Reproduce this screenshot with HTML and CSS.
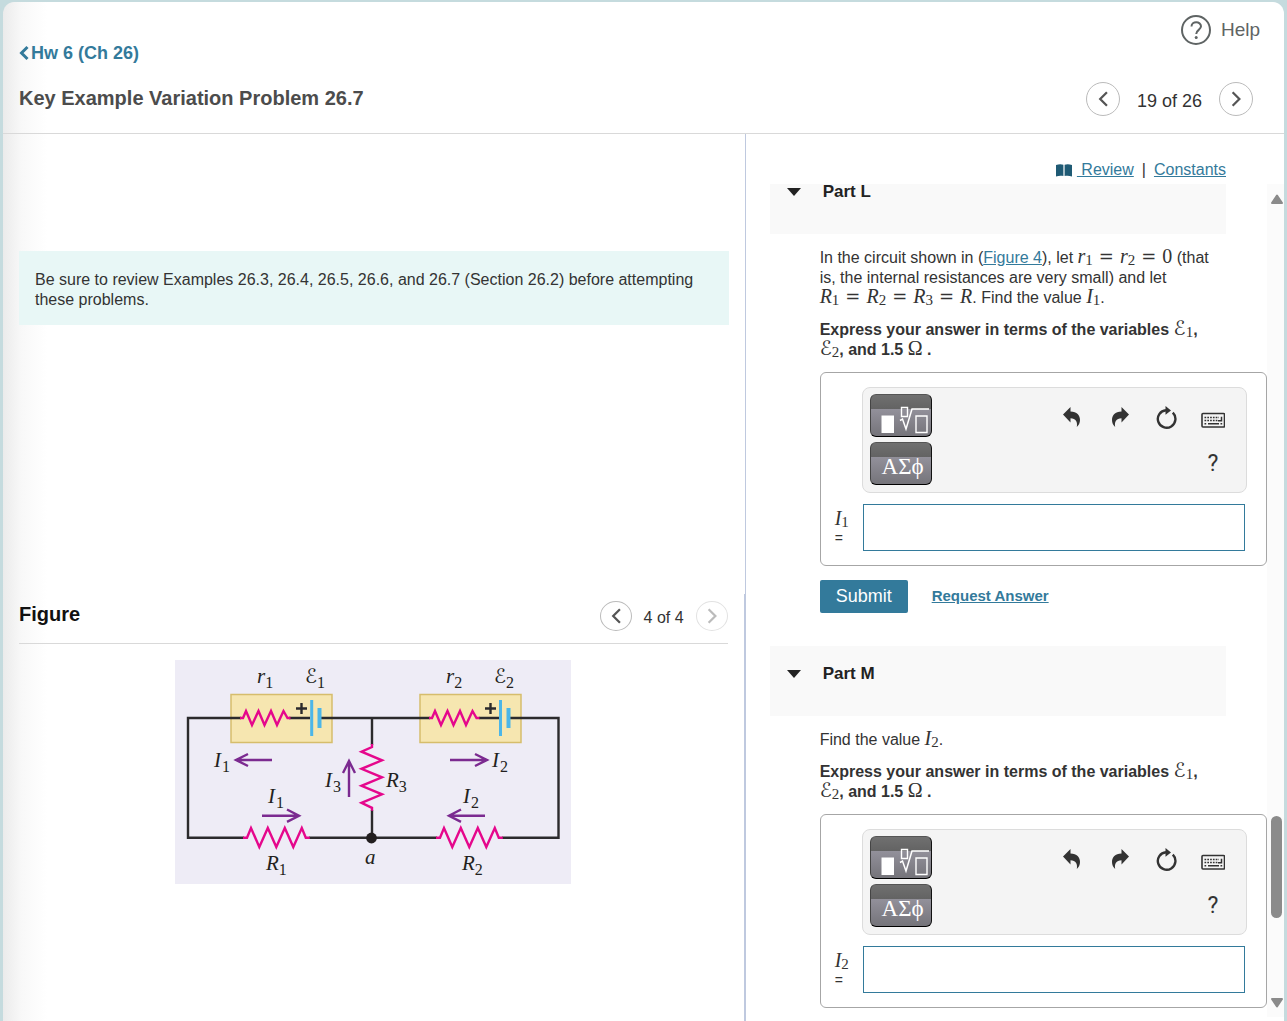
FILE: index.html
```html
<!DOCTYPE html>
<html lang="en">
<head>
  <meta charset="UTF-8">
  <meta name="viewport" content="width=device-width, initial-scale=1">
  <title>Key Example Variation Problem 26.7</title>
  <link rel="stylesheet" href="styles.css">
</head>
<body>
  <!-- Shared icons -->
  <svg class="sprite" aria-hidden="true">
    <symbol id="icon-left" viewBox="0 0 14 16"><path d="M10.500 2L4.500 8l6 6" fill="none" stroke="currentColor" stroke-width="2"/></symbol>
    <symbol id="icon-right" viewBox="0 0 14 16"><path d="M4 2l6 6-6 6" fill="none" stroke="currentColor" stroke-width="2"/></symbol>
    <symbol id="icon-undo" viewBox="0 0 24 24"><path d="M3 8.500L10.500 1v4.500c6.500.2 9.500 3.700 9.500 8.500 0 3-1.200 5-3.200 7 1-5-1-8.500-6.300-8.700v4.200z" fill="currentColor"/></symbol>
    <symbol id="icon-redo" viewBox="0 0 24 24"><path d="M22 8.500L14.500 1v4.500C8 5.700 5 9.200 5 14c0 3 1.200 5 3.200 7-1-5 1-8.500 6.300-8.700v4.200z" fill="currentColor"/></symbol>
    <symbol id="icon-reset" viewBox="0 0 24 24"><path d="M18.800 6.700A8.800 8.800 0 1 1 12 4.200" fill="none" stroke="currentColor" stroke-width="2.400"/><path d="M11.500 0l5.500 4.600-5.500 4.200z" fill="currentColor"/></symbol>
    <symbol id="icon-keyboard" viewBox="0 0 24 24"><rect x="1" y="7.500" width="22.500" height="13.500" rx="1" fill="none" stroke="currentColor" stroke-width="1.600"/><path d="M3.500 11.500H18M3.500 14.500H17M3.500 17.700H6M19.500 17.700H21.500" fill="none" stroke="currentColor" stroke-width="1.500" stroke-dasharray="1.700 1.100"/><path d="M20.500 10.700v4H17M7 17.700h11" fill="none" stroke="currentColor" stroke-width="1.500"/></symbol>
    <symbol id="icon-template" viewBox="0 0 62 43">
      <path d="M11.500 21.500h12.500v17.500h-12.500z" fill="#fff"/>
      <path d="M31.500 13.500h6v9h-6zM46 22h11v16.500h-11z" fill="none" stroke="#fff" stroke-width="1.400"/>
      <path d="M30 26.500l2.500-1.500 3.500 10 6-20h17" fill="none" stroke="#fff" stroke-width="1.500"/>
    </symbol>
  </svg>

  <div class="page">
    <header class="header">
      <div class="header-titles">
        <a class="back-link" href="#"><svg class="back-icon" viewBox="0 0 10 16" aria-hidden="true"><path d="M8.500 2L2.500 8l6 6" fill="none" stroke="currentColor" stroke-width="3"/></svg>Hw 6 (Ch 26)</a>
        <h1>Key Example Variation Problem 26.7</h1>
      </div>
      <div class="header-tools">
        <a class="help-link" href="#">
          <svg class="help-icon" viewBox="0 0 30 30" aria-hidden="true"><circle cx="15" cy="15" r="14" fill="none" stroke="currentColor" stroke-width="2"/><path d="M10.500 11.500c0-5.500 9.500-5.500 9.500-.2 0 3.500-4.800 3.700-4.800 7.700" fill="none" stroke="currentColor" stroke-width="2"/><circle cx="15.200" cy="22.500" r="1.500" fill="currentColor"/></svg>
          Help
        </a>
        <nav class="pager" aria-label="Items">
          <button class="round-btn" aria-label="Previous item"><svg aria-hidden="true"><use href="#icon-left"/></svg></button>
          <span>19 of 26</span>
          <button class="round-btn" aria-label="Next item"><svg aria-hidden="true"><use href="#icon-right"/></svg></button>
        </nav>
      </div>
    </header>

    <main class="columns">
      <div class="left">
        <section class="intro">
          <p class="notice">Be sure to review Examples 26.3, 26.4, 26.5, 26.6, and 26.7 (Section 26.2) before attempting these problems.</p>
        </section>

        <section class="figure">
          <div class="figure-head">
            <h2>Figure</h2>
            <nav class="figure-pager" aria-label="Figures">
              <button class="round-btn small" aria-label="Previous figure"><svg aria-hidden="true"><use href="#icon-left"/></svg></button>
              <span>4 of 4</span>
              <button class="round-btn small" aria-label="Next figure" disabled><svg aria-hidden="true"><use href="#icon-right"/></svg></button>
            </nav>
          </div>

          <svg class="circuit" viewBox="0 0 396 224" role="img" aria-label="Two-loop circuit with two batteries and three resistors">
            <rect width="396" height="224" fill="#eeecf6"/>
            <rect x="56" y="34.500" width="101" height="48" fill="#f6e6b0" stroke="#d6bd6c" stroke-width="1.500"/>
            <rect x="245" y="34.500" width="101" height="48" fill="#f6e6b0" stroke="#d6bd6c" stroke-width="1.500"/>
            <!-- wires -->
            <path class="wire" d="M66 58H13v119.700H69M134 177.700H262M327 177.700H383.500V58H334M324 58H304M255 58H145M135 58H114M197 58V85M197 150V178"/>
            <circle cx="196.500" cy="178" r="5.400" fill="#231f20"/>
            <!-- resistors -->
            <path class="resistor" d="M65 58h3l3-7 6 14 6.500-14 6 14 6.500-14 6 14 6.500-14 4 7h3"/>
            <path class="resistor" d="M254 58h3l3-7 6 14 6.500-14 6 14 6.500-14 6 14 6.500-14 4 7h3"/>
            <path class="resistor" d="M68 177.700h4l4-9.700 8.300 19 8.500-19 8.500 19 8.500-19 8.500 19 8.500-19 4 9.700h4"/>
            <path class="resistor" d="M261 177.700h4l4-9.700 8.300 19 8.500-19 8.500 19 8.500-19 8.500 19 8.500-19 4 9.700h4"/>
            <path class="resistor" d="M197 84v3l-10.500 4.700 20.500 8.600-20.500 8.500 20.500 8.500-20.500 8.500 20.500 8.500-20.500 8.500 10.500 5v3"/>
            <!-- batteries -->
            <path class="plate" d="M136.700 40v36M325.500 40v36"/>
            <path class="plate-thick" d="M144.500 48v20M333.500 48v20"/>
            <path class="wire" d="M121 48.500h11M126.500 43v11M310 48.500h11M315.500 43v11"/>
            <!-- current arrows -->
            <path class="arrow" d="M97 100H61M73 94l-12 6 12 6"/>
            <path class="arrow" d="M87 155.700h36M112 149.500l12 6.200-12 6.200"/>
            <path class="arrow" d="M174 137V101M168 113l6-12 6 12"/>
            <path class="arrow" d="M275 100h36M300 94l12 6-12 6"/>
            <path class="arrow" d="M310 155.700H274M286 149.500l-12 6.200 12 6.200"/>
            <g class="symbols">
              <text x="82" y="23">r<tspan class="idx" dy="5">1</tspan></text>
              <text x="130" y="23"><tspan class="script">ℰ</tspan><tspan class="idx" dy="5">1</tspan></text>
              <text x="271" y="23">r<tspan class="idx" dy="5">2</tspan></text>
              <text x="319" y="23"><tspan class="script">ℰ</tspan><tspan class="idx" dy="5">2</tspan></text>
              <text x="39" y="107">I<tspan class="idx" dx="1" dy="5">1</tspan></text>
              <text x="93" y="143">I<tspan class="idx" dx="1" dy="5">1</tspan></text>
              <text x="150" y="127">I<tspan class="idx" dx="1" dy="5">3</tspan></text>
              <text x="317" y="107">I<tspan class="idx" dx="1" dy="5">2</tspan></text>
              <text x="288" y="143">I<tspan class="idx" dx="1" dy="5">2</tspan></text>
              <text x="91" y="210">R<tspan class="idx" dy="5">1</tspan></text>
              <text x="287" y="210">R<tspan class="idx" dy="5">2</tspan></text>
              <text x="211" y="127">R<tspan class="idx" dy="5">3</tspan></text>
              <text x="190" y="204">a</text>
            </g>
          </svg>
        </section>
      </div>

      <div class="right">
        <div class="resources">
          <svg class="book-icon" viewBox="0 0 16 13" aria-hidden="true"><path d="M0 1C2.500 0 5.500 0 7.400.7V12C5.500 11.500 2.500 11.500 0 12.500zM16 1C13.500 0 10.500 0 8.600.7V12c1.900-.5 4.900-.5 7.400.5z" fill="#1f5a74"/></svg>
          <a href="#">&nbsp;Review</a><span class="bar">|</span><a href="#">Constants</a>
        </div>

        <div class="scroller">
          <div class="parts">
            <section class="part">
              <h2 class="part-head"><button class="part-toggle" aria-expanded="true"><span class="caret"></span>Part L</button></h2>
              <div class="part-body">
                <p>In the circuit shown in (<a href="#">Figure 4</a>), let <span class="math"><i>r</i><sub>1</sub><span class="rel">=</span><i>r</i><sub>2</sub><span class="rel">=</span>0</span> (that is, the internal resistances are very small) and let <span class="math"><i>R</i><sub>1</sub><span class="rel">=</span><i>R</i><sub>2</sub><span class="rel">=</span><i>R</i><sub>3</sub><span class="rel">=</span><i>R</i></span>. Find the value <span class="math"><i>I</i><sub>1</sub></span>.</p>
                <p class="hint">Express your answer in terms of the variables <span class="math"><span class="script">ℰ</span><sub>1</sub></span>, <span class="math"><span class="script">ℰ</span><sub>2</sub></span>, and 1.5 <span class="math">Ω</span> .</p>
                <div class="answer">
                  <div class="toolbar">
                    <div class="palette">
                      <button class="palette-btn" aria-label="Templates"><svg aria-hidden="true"><use href="#icon-template"/></svg></button>
                      <button class="palette-btn">ΑΣϕ</button>
                    </div>
                    <div class="tools">
                      <button class="tool" aria-label="Undo"><svg aria-hidden="true"><use href="#icon-undo"/></svg></button>
                      <button class="tool" aria-label="Redo"><svg aria-hidden="true"><use href="#icon-redo"/></svg></button>
                      <button class="tool" aria-label="Reset"><svg aria-hidden="true"><use href="#icon-reset"/></svg></button>
                      <button class="tool" aria-label="Keyboard shortcuts"><svg aria-hidden="true"><use href="#icon-keyboard"/></svg></button>
                      <button class="tool tool-help">?</button>
                    </div>
                  </div>
                  <label class="answer-label" for="answer-l"><span class="math"><i>I</i><sub>1</sub></span><span class="equals">=</span></label>
                  <input class="answer-input" id="answer-l" type="text">
                </div>
                <div class="actions">
                  <button class="submit">Submit</button>
                  <a class="request" href="#">Request Answer</a>
                </div>
              </div>
            </section>

            <section class="part">
              <h2 class="part-head"><button class="part-toggle" aria-expanded="true"><span class="caret"></span>Part M</button></h2>
              <div class="part-body">
                <p>Find the value <span class="math"><i>I</i><sub>2</sub></span>.</p>
                <p class="hint">Express your answer in terms of the variables <span class="math"><span class="script">ℰ</span><sub>1</sub></span>, <span class="math"><span class="script">ℰ</span><sub>2</sub></span>, and 1.5 <span class="math">Ω</span> .</p>
                <div class="answer">
                  <div class="toolbar">
                    <div class="palette">
                      <button class="palette-btn" aria-label="Templates"><svg aria-hidden="true"><use href="#icon-template"/></svg></button>
                      <button class="palette-btn">ΑΣϕ</button>
                    </div>
                    <div class="tools">
                      <button class="tool" aria-label="Undo"><svg aria-hidden="true"><use href="#icon-undo"/></svg></button>
                      <button class="tool" aria-label="Redo"><svg aria-hidden="true"><use href="#icon-redo"/></svg></button>
                      <button class="tool" aria-label="Reset"><svg aria-hidden="true"><use href="#icon-reset"/></svg></button>
                      <button class="tool" aria-label="Keyboard shortcuts"><svg aria-hidden="true"><use href="#icon-keyboard"/></svg></button>
                      <button class="tool tool-help">?</button>
                    </div>
                  </div>
                  <label class="answer-label" for="answer-m"><span class="math"><i>I</i><sub>2</sub></span><span class="equals">=</span></label>
                  <input class="answer-input" id="answer-m" type="text">
                </div>
              </div>
            </section>
          </div>

          <div class="scrollbar" aria-hidden="true">
            <svg class="scroll-arrow" viewBox="0 0 12 10"><path d="M6 1.500L11 9H1z" fill="#8b8b8b" stroke="#8b8b8b" stroke-linejoin="round" stroke-width="2"/></svg>
            <div class="scroll-track"><div class="scroll-thumb"></div></div>
            <svg class="scroll-arrow" viewBox="0 0 12 10"><path d="M6 8.500L11 1H1z" fill="#8b8b8b" stroke="#8b8b8b" stroke-linejoin="round" stroke-width="2"/></svg>
          </div>
        </div>
      </div>
    </main>
  </div>
</body>
</html>
```

FILE: styles.css
```css
:root {
  --accent: #337a9b;
  --text: #333;
  --line: #d9d9d9;
  --divider: #bfc9df;
  --sans: "Liberation Sans", Arial, sans-serif;
  --serif: "Liberation Serif", "Times New Roman", serif;
}

* {
  box-sizing: border-box;
}

body {
  margin: 0;
  background: #c5dbde;
  font: 16px/20px var(--sans);
  color: var(--text);
}

h1,
h2,
p {
  margin: 0;
}

button {
  padding: 0;
  font: inherit;
  color: inherit;
  cursor: pointer;
}

a {
  color: var(--accent);
}

.sprite {
  display: none;
}

.page {
  display: flex;
  flex-direction: column;
  height: 100vh;
  overflow: hidden;
  border: solid #c5dbde;
  border-width: 2px 3px 0;
  border-radius: 14px 14px 0 0;
  background: linear-gradient(to right, #ebebeb, #f8f8f8 18px, #fff 44px);
}

/* Header */
.header {
  display: flex;
  justify-content: space-between;
  height: 132px;
  padding: 12px 24px 0 16px;
  border-bottom: 1px solid var(--line);
}

.header-titles {
  padding-top: 28px;
}

.back-link {
  display: flex;
  align-items: center;
  gap: 2px;
  font-size: 18px;
  font-weight: bold;
  line-height: 22px;
  text-decoration: none;
}

.back-icon {
  width: 10px;
  height: 16px;
}

h1 {
  margin-top: 22px;
  font-size: 20px;
  line-height: 24px;
  color: #4c4c4c;
}

.header-tools {
  display: flex;
  flex-direction: column;
  align-items: flex-end;
  gap: 36px;
}

.help-link {
  display: flex;
  align-items: center;
  gap: 10px;
  font-size: 19px;
  line-height: 32px;
  color: #5f6464;
  text-decoration: none;
}

.help-icon {
  width: 30px;
  height: 30px;
}

.pager,
.figure-pager {
  display: flex;
  align-items: center;
}

.pager {
  gap: 17px;
  margin-right: 7px;
  font-size: 18px;
}

.pager span,
.figure-pager span {
  padding-top: 4px;
}

.figure-pager {
  gap: 12px;
  padding-bottom: 4px;
}

.round-btn {
  display: flex;
  align-items: center;
  justify-content: center;
  width: 34px;
  height: 34px;
  border: 1px solid #bbb;
  border-radius: 50%;
  background: #fff;
  color: #555;
}

.round-btn svg {
  width: 16px;
  height: 18px;
}

.round-btn.small {
  width: 32px;
  height: 30px;
}

.round-btn:disabled {
  border-color: #e2e2e2;
  color: #bbb;
}

/* Columns */
.columns {
  flex: 1;
  display: grid;
  grid-template-columns: 11fr 8fr;
  min-height: 0;
}

.left {
  display: grid;
  grid-template-rows: 14fr 13fr;
}

.intro {
  padding: 117px 16px 0;
}

.notice {
  padding: 19px 16px 15px;
  background: #e8f7f6;
}

.figure {
  padding: 0 16px;
  border-right: 1px solid var(--divider);
}

.figure-head {
  display: flex;
  align-items: center;
  justify-content: space-between;
  height: 50px;
  border-bottom: 1px solid var(--line);
}

.figure-head h2 {
  padding-bottom: 9px;
  font-size: 20px;
  line-height: 24px;
  color: #111;
}

.circuit {
  display: block;
  width: 396px;
  max-width: 100%;
  margin: 16px auto 0;
}

.wire,
.resistor,
.arrow,
.plate,
.plate-thick {
  fill: none;
  stroke-width: 2.4;
}

.wire {
  stroke: #2b2a2c;
}

.resistor {
  stroke: #e5078c;
}

.arrow {
  stroke: #7b2a90;
}

.plate {
  stroke: #4cb6e8;
  stroke-width: 3;
}

.plate-thick {
  stroke: #4cb6e8;
  stroke-width: 4;
}

.symbols {
  font: italic 21px var(--serif);
  fill: #231f20;
}

.symbols .idx {
  font-size: 16px;
  font-style: normal;
}

/* Right column */
.right {
  display: flex;
  flex-direction: column;
  min-height: 0;
  padding-bottom: 4px;
  border-left: 1px solid var(--divider);
}

.resources {
  display: flex;
  align-items: center;
  justify-content: flex-end;
  padding: 26px 58px 4px 0;
}

.resources .bar {
  padding: 0 8px;
}

.book-icon {
  width: 16px;
  height: 13px;
  margin-right: 5px;
}

.scroller {
  flex: 1;
  display: flex;
  min-height: 0;
  overflow: hidden;
}

/* The list is scrolled part of the way into the first heading */
.parts {
  flex: 1;
  margin-top: -20px;
  padding-left: 24px;
}

.part-head {
  height: 70px;
  margin-right: 41px;
  background: #f9f9f9;
}

.part-toggle {
  display: flex;
  align-items: center;
  gap: 22px;
  width: 100%;
  padding: 18px 17px;
  border: 0;
  background: none;
  font-size: 17px;
  font-weight: bold;
  line-height: 20px;
  color: #222;
}

.caret {
  border: 7px solid transparent;
  border-top: 8px solid #222;
  border-bottom: 0;
}

.part-body {
  padding: 14px 0 33px 50px;
}

.part-body p {
  margin: 0 41px 12px 0;
}

.part-body .hint {
  margin-right: 48px;
  font-weight: bold;
}

/* Inline formulas */
.math {
  font: 20px/0 var(--serif);
  white-space: nowrap;
}

.math sub {
  font-size: 15px;
  line-height: 0;
  vertical-align: -2px;
}

.rel {
  margin: 0 6px;
  font-family: "DejaVu Serif", serif;
  font-size: 18px;
}

.script {
  font-family: "DejaVu Sans", sans-serif;
  font-size: 20px;
  font-style: normal;
}

.answer {
  display: grid;
  grid-template-columns: 27px 1fr;
  row-gap: 11px;
  padding: 14px 19px 14px 14px;
  border: 1px solid #a6a6a6;
  border-radius: 6px;
}

.toolbar {
  grid-column: 2;
  display: flex;
  justify-content: space-between;
  padding: 6px 21px 7px 7px;
  border: 1px solid #dcdcdc;
  border-radius: 8px;
  background: #f4f4f4;
}

.palette {
  display: grid;
  gap: 5px;
}

.palette-btn {
  display: flex;
  align-items: center;
  justify-content: center;
  width: 62px;
  height: 43px;
  padding: 6px 0 0 4px;
  border: 1px solid #222;
  border-color: #555 #111 #000 #444;
  border-radius: 6px;
  background: linear-gradient(#707070, #636363 34%, #92909a 35%, #75747a);
  font: 23px/24px var(--serif);
  color: #fff;
}

.palette-btn svg {
  flex: none;
  width: 62px;
  height: 43px;
  margin: -6px 0 0 -4px;
}

.tools {
  display: grid;
  grid-template-columns: repeat(4, 24px);
  align-content: start;
  gap: 3px 23px;
  padding-top: 2px;
}

.tool {
  display: flex;
  align-items: center;
  justify-content: center;
  height: 43px;
  border: 0;
  background: none;
  color: #333;
}

.tool svg {
  width: 24px;
  height: 24px;
}

.tool-help {
  grid-column: 4;
  font-family: Roboto, sans-serif;
  font-size: 23px;
}

.answer-label {
  display: flex;
  flex-direction: column;
  padding-top: 4px;
}

.answer-label .math {
  line-height: 20px;
}

.answer-label .equals {
  font-size: 14px;
}

.answer-input {
  width: auto;
  height: 47px;
  margin: 0 2px 0 1px;
  padding: 0 8px;
  border: 1px solid var(--accent);
  background: #fff;
  font: 18px var(--sans);
}

.actions {
  display: flex;
  align-items: center;
  gap: 24px;
  margin-top: 14px;
}

.submit {
  height: 33px;
  padding: 0 16px 2px;
  border: 0;
  border-radius: 2px;
  background: var(--accent);
  font-size: 18px;
  color: #fff;
}

.request {
  padding-bottom: 2px;
  font-size: 15px;
  font-weight: bold;
}

/* Scrollbar */
.scrollbar {
  display: flex;
  flex-direction: column;
  align-items: center;
  gap: 3px;
  width: 17px;
  padding: 10px 0 9px 2px;
  background: #fbfbfb;
}

.scroll-arrow {
  flex: none;
  width: 12px;
  height: 10px;
}

.scroll-track {
  flex: 1;
  display: flex;
  flex-direction: column;
  justify-content: flex-end;
  padding-bottom: 77px;
}

.scroll-thumb {
  width: 11px;
  height: 102px;
  border-radius: 6px;
  background: #8b8b8b;
}
```
